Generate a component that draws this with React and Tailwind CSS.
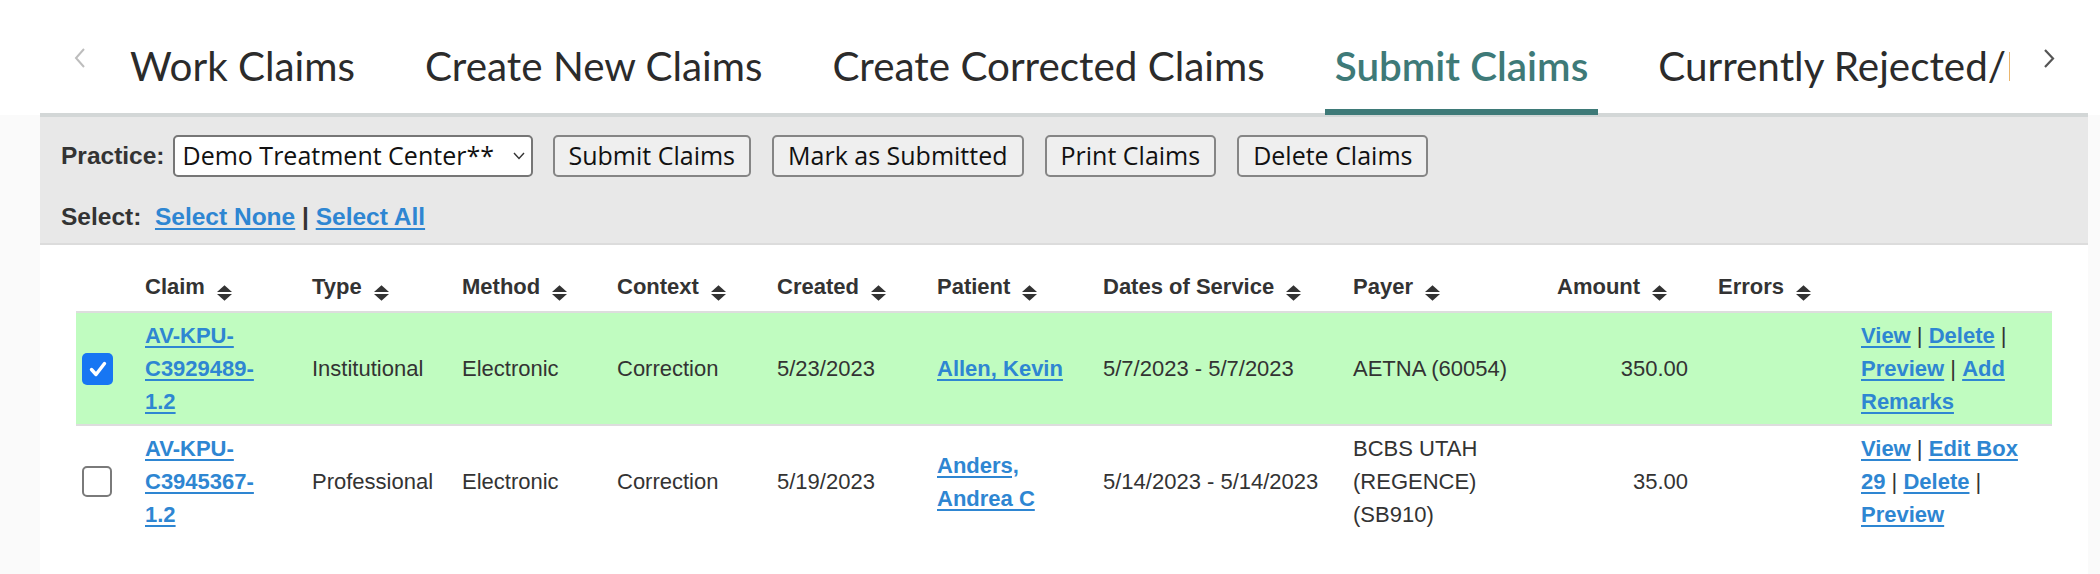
import React from 'react';

const tabs = [
  'Work Claims',
  'Create New Claims',
  'Create Corrected Claims',
  'Submit Claims',
  'Currently Rejected/Denied Claims',
];

const columns = [
  { label: '', width: 'w-[57px]' },
  { label: 'Claim', width: 'w-[167px]' },
  { label: 'Type', width: 'w-[150px]' },
  { label: 'Method', width: 'w-[155px]' },
  { label: 'Context', width: 'w-[160px]' },
  { label: 'Created', width: 'w-[160px]' },
  { label: 'Patient', width: 'w-[166px]' },
  { label: 'Dates of Service', width: 'w-[250px]' },
  { label: 'Payer', width: 'w-[204px]' },
  { label: 'Amount', width: 'w-[161px]' },
  { label: 'Errors', width: 'w-[143px]' },
  { label: '', width: 'w-[203px]' },
];

const claims = [
  {
    checked: true,
    claim: ['AV-KPU-', 'C3929489-', '1.2'],
    type: 'Institutional',
    method: 'Electronic',
    context: 'Correction',
    created: '5/23/2023',
    patient: 'Allen, Kevin',
    dos: '5/7/2023 - 5/7/2023',
    payer: 'AETNA (60054)',
    amount: '350.00',
    actions: ['View', 'Delete', 'Preview', 'Add Remarks'],
  },
  {
    checked: false,
    claim: ['AV-KPU-', 'C3945367-', '1.2'],
    type: 'Professional',
    method: 'Electronic',
    context: 'Correction',
    created: '5/19/2023',
    patient: 'Anders, Andrea C',
    dos: '5/14/2023 - 5/14/2023',
    payer: 'BCBS UTAH (REGENCE) (SB910)',
    amount: '35.00',
    actions: ['View', 'Edit Box 29', 'Delete', 'Preview'],
  },
];

const link = 'font-bold text-[#2e86d2] underline decoration-2 underline-offset-[3px]';

function SortIcon() {
  return (
    <svg width="15" height="16" viewBox="0 0 15 16" className="ml-[12px] inline-block align-[-7px]">
      <path d="M7.5 0.3L15 7.1H0Z" fill="#333" />
      <path d="M0 8.9H15L7.5 15.7Z" fill="#333" />
    </svg>
  );
}

function TabBar() {
  return (
    <div className="h-[115px] bg-white">
      <div className="relative z-10 flex h-[115px]">
        <div className="w-[120px] shrink-0 pl-[74px] pt-[48px]">
          <svg width="12" height="20" viewBox="0 0 12 20">
            <polyline points="10,1 2,10 10,19" fill="none" stroke="#bdbdbd" strokeWidth="2" />
          </svg>
        </div>
        <div className="flex w-[1890px] shrink-0 gap-[50px] overflow-hidden font-['Lato',sans-serif] text-[40.4px] leading-[48px]">
          {tabs.map((t) => (
            <div
              key={t}
              className={
                'flex shrink-0 items-end whitespace-nowrap border-b-[6px] px-[10px] pb-[19px] ' +
                (t === 'Submit Claims'
                  ? 'border-[#3e7a78] font-semibold text-[#3e7a78]'
                  : 'border-transparent text-[#2b2b2b]')
              }
            >
              {t}
            </div>
          ))}
        </div>
        <div className="pl-[33px] pt-[49px]">
          <svg width="12" height="19" viewBox="0 0 12 19">
            <polyline points="2,1 10,9.5 2,18" fill="none" stroke="#555" strokeWidth="2.2" />
          </svg>
        </div>
      </div>
    </div>
  );
}

function Toolbar() {
  return (
    <div className="border-t-4 border-b-2 border-t-[#d3d7d7] border-b-[#dcdcdc] bg-[#e8e8e8] pl-[21px] pt-[18px] pb-[10px]">
      <div className="flex h-[42px] items-center">
        <span className="mr-[8px] text-[24.5px] font-bold">Practice:</span>
        <div className="relative">
          <select className="h-[42px] w-[360px] appearance-none rounded-[5px] border-2 border-[#767676] bg-white pl-[8px] font-['Open_Sans',sans-serif] text-[25px] text-[#111]">
            <option>Demo Treatment Center**</option>
          </select>
          <svg
            width="12"
            height="8"
            viewBox="0 0 12 8"
            className="pointer-events-none absolute right-[8px] top-[17px]"
          >
            <polyline points="1,1 6,6.5 11,1" fill="none" stroke="#333" strokeWidth="1.4" />
          </svg>
        </div>
        <div className="ml-[20px] flex gap-[21px] font-['Open_Sans',sans-serif] text-[25px] text-[#111]">
          {['Submit Claims', 'Mark as Submitted', 'Print Claims', 'Delete Claims'].map((b) => (
            <button
              key={b}
              className="h-[42px] rounded-[5px] border-2 border-[#858585] bg-[#efefef] px-[14px]"
            >
              {b}
            </button>
          ))}
        </div>
      </div>
      <div className="mt-[23px] text-[24.5px] font-bold leading-[33px]">
        Select:&nbsp;&nbsp;
        <a href="#" className={link}>
          Select None
        </a>{' '}
        |{' '}
        <a href="#" className={link}>
          Select All
        </a>
      </div>
    </div>
  );
}

function Checkbox({ checked }) {
  if (checked) {
    return (
      <span className="flex h-[32px] w-[31px] items-center justify-center rounded-[5px] bg-[#1776f3]">
        <svg width="20" height="20" viewBox="0 0 20 20">
          <path
            d="M3.5 10.5l4.5 5 8.5-11"
            fill="none"
            stroke="white"
            strokeWidth="3.4"
            strokeLinecap="round"
            strokeLinejoin="round"
          />
        </svg>
      </span>
    );
  }
  return <span className="block h-[31px] w-[30px] rounded-[5px] border-2 border-[#7a7a7a] bg-white" />;
}

function ClaimsTable() {
  return (
    <table className="ml-[36px] mt-[17px] w-[1976px] table-fixed border-collapse text-[22px] leading-[33px]">
      <colgroup>
        {columns.map((c, i) => (
          <col key={i} className={c.width} />
        ))}
      </colgroup>
      <thead>
        <tr className="border-b-2 border-[#dddddd]">
          {columns.map((c, i) => (
            <th key={i} className="whitespace-nowrap px-[12px] py-[8px] text-left font-bold">
              {c.label}
              {c.label && <SortIcon />}
            </th>
          ))}
        </tr>
      </thead>
      <tbody>
        {claims.map((r, i) => (
          <tr key={i} className={r.checked ? 'border-b-2 border-[#dddddd] bg-[#c0fcc0]' : ''}>
            <td className="py-[6px] pl-[6px] align-middle">
              <Checkbox checked={r.checked} />
            </td>
            <td className="px-[12px] py-[6px]">
              <a href="#" className={link}>
                {r.claim[0]}
                <br />
                {r.claim[1]}
                <br />
                {r.claim[2]}
              </a>
            </td>
            <td className="px-[12px] py-[6px]">{r.type}</td>
            <td className="px-[12px] py-[6px]">{r.method}</td>
            <td className="px-[12px] py-[6px]">{r.context}</td>
            <td className="px-[12px] py-[6px]">{r.created}</td>
            <td className="px-[12px] py-[6px]">
              <a href="#" className={link}>
                {r.patient}
              </a>
            </td>
            <td className="px-[12px] py-[6px]">{r.dos}</td>
            <td className="px-[12px] py-[6px]">{r.payer}</td>
            <td className="py-[6px] pl-[12px] pr-[18px] text-right">{r.amount}</td>
            <td className="px-[12px] py-[6px]"></td>
            <td className="px-[12px] py-[6px]">
              {r.actions.map((a, j) => (
                <React.Fragment key={a}>
                  {j > 0 && ' | '}
                  <a href="#" className={link}>
                    {a}
                  </a>
                </React.Fragment>
              ))}
            </td>
          </tr>
        ))}
      </tbody>
    </table>
  );
}

export default function App() {
  return (
    <div className="min-h-screen bg-[#fafafa] font-['Liberation_Sans',Arial,sans-serif] text-[#333]">
      <TabBar />
      <div className="relative -mt-[2px] ml-[40px] w-[2048px] bg-white pb-[40px]">
        <Toolbar />
        <ClaimsTable />
      </div>
    </div>
  );
}
